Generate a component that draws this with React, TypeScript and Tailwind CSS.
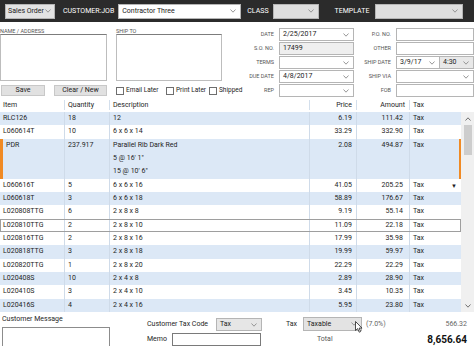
import React from 'react';

type Row = {
  item: string;
  qty: string;
  desc: string[];
  price: string;
  amount: string;
  blue?: boolean;
  active?: boolean;
  focused?: boolean;
  arrow?: boolean;
};

const ROWS: Row[] = [
  { item: 'RLC126', qty: '18', desc: ['12'], price: '6.19', amount: '111.42', blue: true },
  { item: 'L060614T', qty: '10', desc: ['6 x 6 x 14'], price: '33.29', amount: '332.90' },
  { item: 'PDR', qty: '237.917', desc: ['Parallel Rib Dark Red', '5 @ 16\' 1"', '15 @ 10\' 6"'], price: '2.08', amount: '494.87', blue: true, active: true },
  { item: 'L060616T', qty: '5', desc: ['6 x 6 x 16'], price: '41.05', amount: '205.25', arrow: true },
  { item: 'L060618T', qty: '3', desc: ['6 x 6 x 18'], price: '58.89', amount: '176.67', blue: true },
  { item: 'L020808TTG', qty: '6', desc: ['2 x 8 x 8'], price: '9.19', amount: '55.14' },
  { item: 'L020810TTG', qty: '2', desc: ['2 x 8 x 10'], price: '11.09', amount: '22.18', focused: true },
  { item: 'L020816TTG', qty: '2', desc: ['2 x 8 x 16'], price: '17.99', amount: '35.98' },
  { item: 'L020818TTG', qty: '3', desc: ['2 x 8 x 18'], price: '19.99', amount: '59.97', blue: true },
  { item: 'L020820TTG', qty: '1', desc: ['2 x 8 x 20'], price: '22.29', amount: '22.29' },
  { item: 'L020408S', qty: '10', desc: ['2 x 4 x 8'], price: '2.89', amount: '28.90', blue: true },
  { item: 'L020410S', qty: '3', desc: ['2 x 4 x 10'], price: '3.45', amount: '10.35' },
  { item: 'L020416S', qty: '4', desc: ['2 x 4 x 16'], price: '5.95', amount: '23.80', blue: true },
];

function Chevron() {
  return (
    <svg width="6" height="4" viewBox="0 0 6 4" className="shrink-0">
      <polyline points="0.5,0.5 3,3.2 5.5,0.5" fill="none" stroke="#8c8c8c" strokeWidth="0.9" />
    </svg>
  );
}

function Select({ text, className }: { text?: string; className: string }) {
  return (
    <div className={`flex h-[13px] shrink-0 items-center justify-between whitespace-nowrap border border-[#b5b5b5] pl-[3px] pr-[4px] text-[7px] text-[#222] ${className}`}>
      <span>{text}</span>
      <Chevron />
    </div>
  );
}

function Field({ text, className }: { text?: string; className: string }) {
  return (
    <div className={`flex h-[13px] shrink-0 items-center border border-[#b5b5b5] pl-[3px] text-[7px] text-[#222] ${className}`}>
      {text}
    </div>
  );
}

function Check({ label, className }: { label: string; className?: string }) {
  return (
    <div className={`flex shrink-0 items-center gap-[2px] text-[6.5px] ${className ?? ''}`}>
      <div className="h-[8px] w-[8px] border border-[#6e6e6e] bg-white" />
      <span>{label}</span>
    </div>
  );
}

function Pointer() {
  return (
    <svg width="8" height="12" viewBox="0 0 8 12" className="absolute left-[52px] top-[4px]">
      <path d="M0.5 0.5 L0.5 9.5 L2.6 7.6 L4.2 11.2 L5.6 10.6 L4.1 7.1 L7 7.1 Z" fill="white" stroke="#222" strokeWidth="0.8" />
    </svg>
  );
}

export default function App() {
  return (
    <div className="h-[346px] w-[474px] overflow-hidden bg-white font-['Roboto',sans-serif] text-[#1e1e1e]">
      {/* top bar */}
      <div className="flex h-[22px] items-center bg-[#2b2b2b] text-[7px] text-white">
        <Select text="Sales Order" className="ml-[5px] h-[15px] w-[50px] bg-[#e3e3e3] !pl-[2px] !pr-[3px]" />
        <span className="ml-[8px]">CUSTOMER:JOB</span>
        <Select text="Contractor Three" className="ml-[4px] h-[15px] w-[123px] bg-white" />
        <span className="ml-[6px]">CLASS</span>
        <Select className="ml-[4px] h-[15px] w-[46px] bg-[#dedede]" />
        <span className="ml-[16px]">TEMPLATE</span>
        <Select className="ml-[6px] h-[15px] w-[88px] bg-[#dedede]" />
      </div>

      {/* header form */}
      <div className="flex h-[76px]">
        <div className="w-[222px] shrink-0 pt-[6px]">
          <div className="flex h-[6px] text-[5.5px] leading-[6px] text-[#555]">
            <span className="w-[116px]">NAME / ADDRESS</span>
            <span>SHIP TO</span>
          </div>
          <div className="flex gap-[9px]">
            <div className="h-[47px] w-[107px] border border-[#bdbdbd] border-t-[#7c7c7c]" />
            <div className="h-[47px] w-[106px] border border-[#bdbdbd] border-t-[#7c7c7c]" />
          </div>
          <div className="mt-[4px] flex h-[11px] items-center whitespace-nowrap text-[7px]">
            <div className="ml-[1px] flex h-[11px] w-[44px] shrink-0 items-center justify-center border border-[#c8c8c8] bg-[#e1e1e1]">Save</div>
            <div className="ml-[9px] flex h-[11px] w-[53px] shrink-0 items-center justify-center border border-[#c8c8c8] bg-[#e1e1e1]">Clear / New</div>
            <div className="ml-[9px] flex shrink-0">
              <Check label="Email Later" className="w-[50px]" />
              <Check label="Print Later" className="w-[43px]" />
              <Check label="Shipped" />
            </div>
          </div>
        </div>
        <div className="flex flex-col gap-[1px] pt-[6px] text-[5.5px] text-[#555]">
          {[
            ['DATE', <Select text="2/25/2017" className="w-[75px] bg-white" />, 'P.O. NO.', <Field className="w-[78px] bg-white" />],
            ['S.O. NO.', <Field text="17499" className="w-[75px] bg-[#efefef]" />, 'OTHER', <Field className="w-[78px] bg-white" />],
            [
              'TERMS',
              <Select className="w-[75px] bg-white" />,
              'SHIP DATE',
              <div className="flex w-[78px]">
                <Select text="3/9/17" className="w-[44px] bg-white" />
                <Select text="4:30" className="w-[34px] border-l-0 bg-[#e8e8e8]" />
              </div>,
            ],
            ['DUE DATE', <Select text="4/8/2017" className="w-[75px] bg-white" />, 'SHIP VIA', <Select className="w-[78px] bg-white" />],
            ['REP', <Select className="w-[75px] bg-white" />, 'FOB', <Field className="w-[78px] bg-white" />],
          ].map((r, i) => (
            <div key={i} className="flex h-[13px] items-center">
              <span className="w-[52px] text-right">{r[0]}</span>
              <div className="ml-[5px]">{r[1]}</div>
              <span className="w-[37px] text-right">{r[2]}</span>
              <div className="ml-[5px]">{r[3]}</div>
            </div>
          ))}
        </div>
      </div>

      {/* table header */}
      <div className="flex h-[14px] items-center text-[7px]">
        <div className="w-[65px] border-r border-[#d3dfec] pl-[3px]">Item</div>
        <div className="w-[45px] border-r border-[#d3dfec] pl-[3px]">Quantity</div>
        <div className="w-[200px] border-r border-[#d3dfec] pl-[3px]">Description</div>
        <div className="w-[47px] border-r border-[#d3dfec] pr-[4px] text-right">Price</div>
        <div className="w-[53px] border-r border-[#d3dfec] pr-[4px] text-right">Amount</div>
        <div className="w-[51px] pl-[3px]">Tax</div>
      </div>

      {/* table body */}
      <div className="flex h-[200px]">
        <div className="w-[461px] text-[7px] leading-[13.33px]">
          {ROWS.map((r) => (
            <div
              key={r.item}
              className={`flex ${r.blue ? 'bg-[#dce8f6]' : 'bg-white'} ${r.focused ? 'outline-1 -outline-offset-1 outline-[#9e9e9e]' : ''}`}
            >
              <div className={`w-[65px] border-r border-[#cfdbe9] pl-[3px] ${r.active ? 'border-l-[3px] border-l-[#f08a24] pl-[1px]' : ''}`}>{r.item}</div>
              <div className="w-[45px] border-r border-[#cfdbe9] pl-[3px]">{r.qty}</div>
              <div className="w-[200px] border-r border-[#cfdbe9] pl-[3px]">
                {r.desc.map((d) => (
                  <div key={d}>{d}</div>
                ))}
              </div>
              <div className="w-[47px] border-r border-[#cfdbe9] pr-[4px] text-right">{r.price}</div>
              <div className="w-[53px] border-r border-[#cfdbe9] pr-[6px] text-right">{r.amount}</div>
              <div className={`flex w-[51px] justify-between pl-[3px] pr-[4px] ${r.active ? 'border-r-2 border-[#f08a24]' : ''}`}>
                <span>Tax</span>
                {r.arrow && <span className="text-[6px]">▼</span>}
              </div>
            </div>
          ))}
        </div>
        <div className="flex w-[13px] flex-col items-center bg-[#f0f0f0]">
          <svg width="6" height="4" viewBox="0 0 6 4" className="mt-[5px]">
            <polyline points="0.5,3.5 3,0.8 5.5,3.5" fill="none" stroke="#606060" strokeWidth="0.9" />
          </svg>
          <div className="mt-[4px] h-[30px] w-[8px] bg-[#cdcdcd]" />
          <div className="flex-1" />
          <svg width="6" height="4" viewBox="0 0 6 4" className="mb-[4px]">
            <polyline points="0.5,0.5 3,3.2 5.5,0.5" fill="none" stroke="#606060" strokeWidth="0.9" />
          </svg>
        </div>
      </div>

      {/* footer */}
      <div className="flex h-[34px] text-[7px]">
        <div className="w-[147px] shrink-0">
          <div className="h-[15px] pl-[2px] pt-[3px] leading-[9px]">Customer Message</div>
          <div className="ml-[2px] h-[22px] w-[108px] border border-[#8c8c8c]" />
        </div>
        <div className="w-[118px] shrink-0">
          <div className="mt-[6px] flex h-[13px] items-center">
            <span className="w-[69px]">Customer Tax Code</span>
            <Select text="Tax" className="w-[46px] bg-[#e6e6e6]" />
          </div>
          <div className="mt-[2px] flex h-[13px] items-center">
            <span className="w-[25px]">Memo</span>
            <div className="h-[13px] w-[89px] shrink-0 border border-[#7a7a7a] bg-white" />
          </div>
        </div>
        <div className="flex-1 pr-[7px]">
          <div className="mt-[5px] flex h-[14px] items-center">
            <span className="w-[32px] text-right">Tax</span>
            <div className="relative ml-[6px]">
              <Select text="Taxable" className="h-[14px] w-[59px] bg-[#e3e3e3]" />
              <Pointer />
            </div>
            <span className="ml-[4px] text-[#666]">(7.0%)</span>
            <span className="ml-auto text-[#666]">566.32</span>
          </div>
          <div className="mt-[1px] flex h-[14px] items-center">
            <span className="ml-[52px] text-[#555]">Total</span>
            <span className="ml-auto text-[10px] font-bold text-[#111]">8,656.64</span>
          </div>
        </div>
      </div>
    </div>
  );
}
